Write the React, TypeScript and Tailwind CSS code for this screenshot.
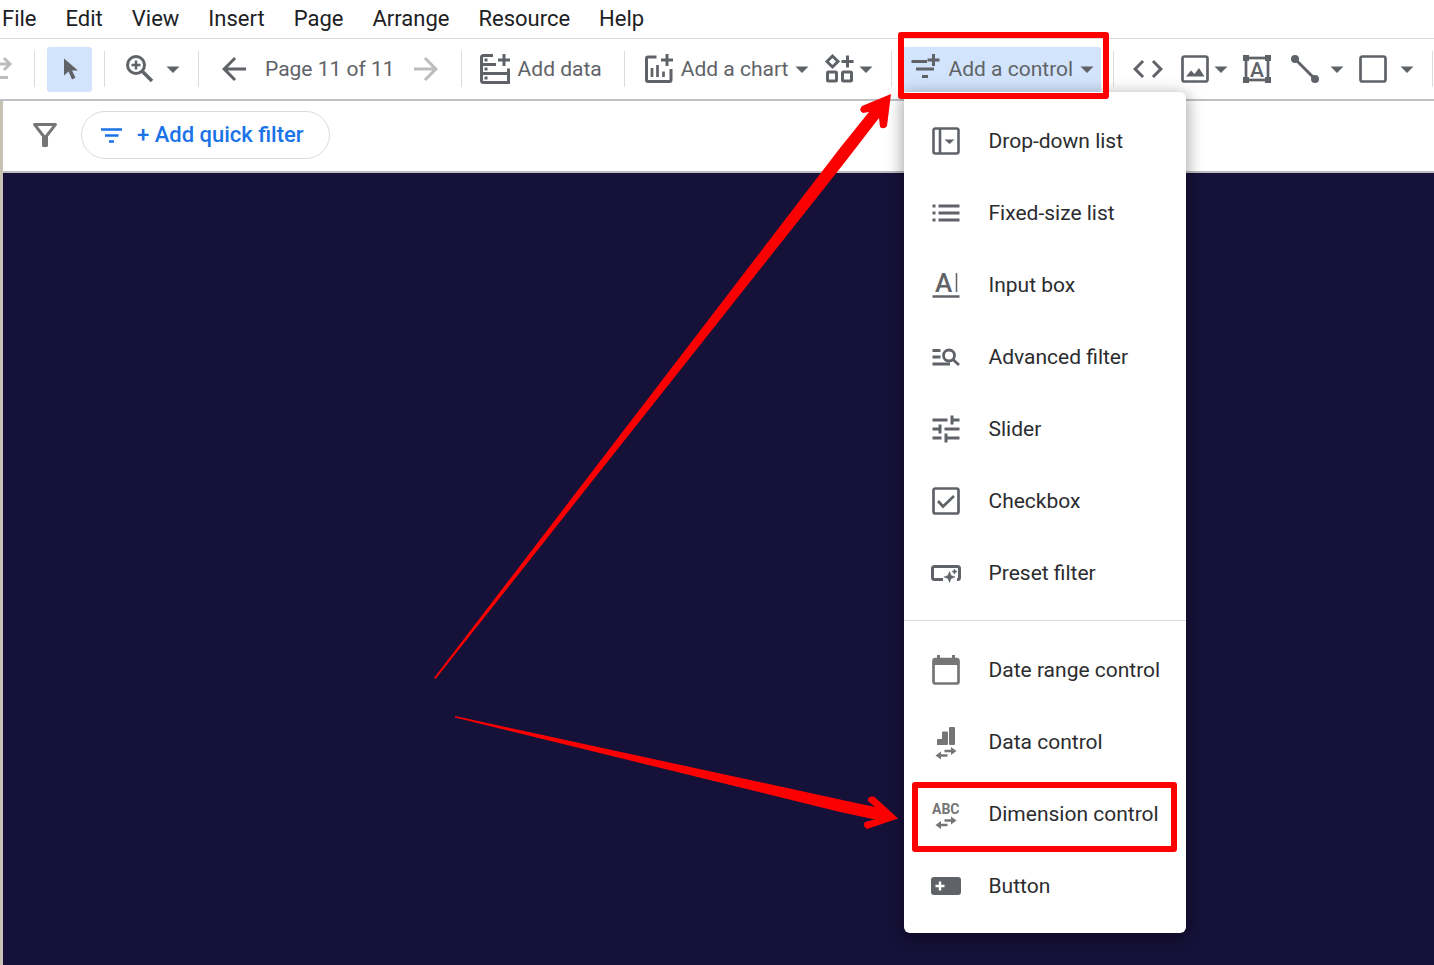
import type { ReactNode } from 'react'
import { MdArrowBack, MdArrowForward, MdTune, MdZoomIn, MdCode, MdOutlineFilterAlt } from 'react-icons/md'

function Caret(): ReactNode {
    return (
        <svg className="w-[14px] h-[7px] shrink-0" viewBox="0 0 14 7" fill="currentColor">
            <path d="M0.5 0.5h13L7 7z" />
        </svg>
    )
}

function Divider(): ReactNode {
    return <div className="w-px h-9 bg-[#dadce0] shrink-0" />
}

function Icon({ children, className = 'w-[30px] h-[30px]', box = '0 0 30 30' }: { children: ReactNode; className?: string; box?: string }): ReactNode {
    return (
        <svg className={`${className} shrink-0 overflow-visible`} viewBox={box} fill="none" stroke="currentColor" strokeWidth="3">
            {children}
        </svg>
    )
}

function SwapArrows({ y }: { y: number }): ReactNode {
    return (
        <g transform={`translate(0 ${y})`}>
            <path d="M13.5 0H21M9 4.500H16.500" strokeWidth="2.600" />
            <path d="M20 -4l5.500 4l-5.500 4zM10 0.500l-5.500 4l5.500 4z" fill="currentColor" stroke="none" />
        </g>
    )
}

const menus = ['File', 'Edit', 'View', 'Insert', 'Page', 'Arrange', 'Resource', 'Help']

const filters = [
    {
        name: 'Drop-down list',
        icon: (
            <Icon>
                <rect x="2.5" y="2.5" width="25" height="25" rx="2" strokeWidth="2.6" />
                <path d="M9 2v26" strokeWidth="2.6" />
                <path d="M13.500 13.500h10l-5 4.500z" fill="currentColor" stroke="none" />
            </Icon>
        ),
    },
    {
        name: 'Fixed-size list',
        icon: (
            <Icon>
                <path d="M7.500 8H28.500M7.500 15H28.500M7.500 22H28.500M1.500 8h3M1.500 15h3M1.500 22h3" strokeWidth="3.200" />
            </Icon>
        ),
    },
    {
        name: 'Input box',
        icon: (
            <Icon>
                <path d="M1.500 26.500h27" strokeWidth="2.500" />
                <text x="4" y="22" fontSize="26" fontWeight="500" fill="currentColor" stroke="none">A</text>
                <path d="M25.500 3v19" strokeWidth="1.500" />
            </Icon>
        ),
    },
    {
        name: 'Advanced filter',
        icon: (
            <Icon>
                <path d="M1.500 8.500h8M1.500 15h8M1.500 22h17.500" strokeWidth="2.800" />
                <circle cx="18" cy="13.5" r="5.5" strokeWidth="2.8" />
                <path d="M22 17.500l6 5.500" strokeWidth="2.800" />
            </Icon>
        ),
    },
    { name: 'Slider', icon: <MdTune className="w-9 h-9" /> },
    {
        name: 'Checkbox',
        icon: (
            <Icon>
                <rect x="2.5" y="2.5" width="25" height="25" rx="2" strokeWidth="2.7" />
                <path d="M7 15l5 5.500L23 10" strokeWidth="2.700" />
            </Icon>
        ),
    },
    {
        name: 'Preset filter',
        icon: (
            <Icon>
                <path d="M12 21.500H3.500q-2 0-2-2V10.500q0-2 2-2h23q2 0 2 2v9q0 2-2 2H26" />
                <path d="M18.500 13.500l1.500 4l4 1.500l-4 1.500l-1.500 4l-1.500-4l-4-1.500l4-1.500zM23.500 11l.8 1.800l1.800.8l-1.800.8l-.8 1.800l-.8-1.800l-1.800-.8l1.800-.8z" fill="currentColor" strokeWidth="0.5" />
            </Icon>
        ),
    },
]

const controls = [
    {
        name: 'Date range control',
        icon: (
            <Icon className="w-[30px] h-[30px] text-[#757575]">
                <rect x="2.5" y="4" width="25" height="24.5" rx="2" strokeWidth="2.7" />
                <path d="M2 4h26v6H2z" fill="currentColor" stroke="none" />
                <path d="M7.500 0v5M22.500 0v5" />
            </Icon>
        ),
    },
    {
        name: 'Data control',
        icon: (
            <Icon className="w-[30px] h-9 text-[#757575]" box="0 0 30 36">
                <path d="M6 21v-5q0-1 1-1h4V8.500q0-1 1-1h4q1 0 1 1V20q0 1-1 1zM18 20V4q0-1 1-1h4q1 0 1 1v16q0 1-1 1h-4q-1 0-1-1z" fill="currentColor" stroke="none" />
                <SwapArrows y={27} />
            </Icon>
        ),
    },
    {
        name: 'Dimension control',
        marked: true,
        icon: (
            <Icon className="w-[30px] h-9 text-[#757575]" box="0 0 30 36">
                <text x="1" y="18" fontSize="14" fontWeight="700" fill="currentColor" stroke="none">ABC</text>
                <SwapArrows y={24.5} />
            </Icon>
        ),
    },
    {
        name: 'Button',
        icon: (
            <Icon>
                <rect x="0" y="6" width="30" height="18" rx="3" fill="currentColor" stroke="none" />
                <path d="M4.500 15h9M9 10.500v9" stroke="white" strokeWidth="2.4" />
            </Icon>
        ),
    },
]

function MenuItem({ name, icon, marked = false }: { name: string; icon: ReactNode; marked?: boolean }): ReactNode {
    return (
        <li className="relative">
            <button className="flex items-center w-full h-18 pl-6 gap-6 text-[#2b2c2f] whitespace-nowrap">
                <span className="w-9 flex justify-center text-[#5f6368]">{icon}</span>
                {name}
            </button>
            {marked && <span className="absolute left-2 right-[9px] top-1 -bottom-[2px] border-6 border-[#ff0000] rounded-[3px] pointer-events-none" />}
        </li>
    )
}

function ControlMenu(): ReactNode {
    return (
        <div className="absolute left-px top-full w-[282px] bg-white rounded-md shadow-[0_4px_16px_2px_rgba(0,0,0,0.35)] z-10">
            <ul className="pt-[13px] pb-[11px] border-b border-[#dadce0]">
                {filters.map((f) => (
                    <MenuItem key={f.name} {...f} />
                ))}
            </ul>
            <ul className="pt-[13px] pb-[11px]">
                {controls.map((c) => (
                    <MenuItem key={c.name} {...c} />
                ))}
            </ul>
        </div>
    )
}

function Arrows(): ReactNode {
    return (
        <svg className="absolute left-0 top-0 w-[1434px] h-[965px] z-20 pointer-events-none" viewBox="0 0 1434 965" fill="#fa0000">
            <path d="M434 678L840 148L869 112L863 113Q858 111 862 106L891 94L887 126Q884 130 880 127L879 118L845 162L435.500 679z" />
            <path d="M455 716L840 799.500L875 807L868 801Q867 796 874 796.500L898 818.500L867 829Q862 826 865 822L875 819.500L840 812L455 717.500z" />
        </svg>
    )
}

export default function App(): ReactNode {
    return (
        <div className="relative min-h-screen flex flex-col bg-white overflow-hidden font-['Roboto',sans-serif] text-[21px] leading-6">
            <nav className="flex items-center h-[39px] pl-[2px] pb-px gap-[29px] border-b border-[#dadce0] text-[22px] text-[#202124]">
                {menus.map((m) => (
                    <button key={m}>{m}</button>
                ))}
            </nav>

            <div className="flex items-center h-[62px] border-b-2 border-[#bdc1c6] text-[#5f6368] whitespace-nowrap">
                <button aria-label="Redo" className="text-[#bdbdbd] mr-[22px]">
                    <Icon className="w-3 h-[30px]" box="0 0 12 30">
                        <path d="M0 10h10M4 4l6 6l-6 6M0 23.500h8" />
                    </Icon>
                </button>
                <Divider />
                <button aria-label="Select" className="w-[45px] h-[45px] mx-3 bg-[#d2e3fc] rounded-[3px] flex items-center justify-center shrink-0">
                    <Icon>
                        <path d="M9 4.500v17l4.500-4l3.500 8l3.500-1.700l-3.500-7.300h6z" fill="currentColor" stroke="none" />
                    </Icon>
                </button>
                <Divider />
                <button aria-label="Zoom" className="flex items-center gap-2 ml-[17px] mr-[18px]">
                    <Icon className="w-9 h-9" box="0 0 36 36">
                        <circle cx="14" cy="14" r="8.5" />
                        <path d="M20 20l10 10" strokeWidth="3.5" />
                        <path d="M14 9.500v9M9.500 14h9" strokeWidth="2.500" />
                    </Icon>
                    <Caret />
                </button>
                <Divider />
                <button aria-label="Previous page" className="ml-[17px]">
                    <MdArrowBack className="w-9 h-9" />
                </button>
                <button className="ml-[13px]">Page 11 of 11</button>
                <button aria-label="Next page" className="ml-[13px] mr-[17px] text-[#bdbdbd]">
                    <MdArrowForward className="w-9 h-9" />
                </button>
                <Divider />
                <button className="flex items-center gap-2 ml-[18px] mr-[22px]">
                    <Icon>
                        <path d="M13 1.500H3.500q-2 0-2 2V26.500q0 2 2 2H28.500V14.500M1.500 10.500H16M1.500 19.500H28.500M24 0v12M18 6h12" />
                        <path d="M4.500 6h3M4.500 15h3M4.500 24h3" />
                    </Icon>
                    Add data
                </button>
                <Divider />
                <button className="flex items-center gap-[7px] ml-[19px] mr-4">
                    <Icon>
                        <path d="M12.500 3H4q-1.500 0-1.500 1.500V26q0 1.500 1.500 1.500h21.500q1.500 0 1.500-1.500V15M23 0v12M17 6h12" />
                        <path d="M8 14v9M13.500 11v12M19.500 17.500v5.500" strokeWidth="2.700" />
                    </Icon>
                    Add a chart
                    <Caret />
                </button>
                <button aria-label="Community visualizations" className="flex items-center gap-1 mr-[18px]">
                    <Icon>
                        <path d="M7.500 2L13 7.500L7.500 13L2 7.500zM22.500 1.500v12M16.500 7.500h12" />
                        <rect x="2.5" y="18" width="9" height="9" rx="1" />
                        <rect x="17.500" y="18" width="9" height="9" rx="1" />
                    </Icon>
                    <Caret />
                </button>
                <Divider />
                <div className="relative ml-[11px] mr-3 shrink-0">
                    <button className="flex items-center h-[45px] pl-2 pr-[7px] gap-[7px] bg-[#d2e3fc] rounded-[3px]">
                        <Icon>
                            <path d="M0.500 7.500H16M22.500 0v12M16.500 6h12M5 15H23M11 22.500h6" />
                        </Icon>
                        Add a control
                        <Caret />
                    </button>
                    <ControlMenu />
                    <span className="absolute -left-[5px] -right-2 -top-[15px] -bottom-[7px] border-6 border-[#ff0000] rounded-[3px] z-20 pointer-events-none" />
                </div>
                <Divider />
                <button aria-label="Embed" className="ml-4 mr-[14px]">
                    <MdCode className="w-9 h-9" />
                </button>
                <button aria-label="Image" className="flex items-center gap-1 mr-[14px]">
                    <Icon>
                        <rect x="2.5" y="2.5" width="25" height="25" rx="2" strokeWidth="2.7" />
                        <path d="M6 22.500l5-6l3.500 3.500l4.500-6l5.500 8.500z" fill="currentColor" stroke="none" />
                    </Icon>
                    <Caret />
                </button>
                <button aria-label="Text" className="mr-[18px]">
                    <Icon>
                        <rect x="4" y="4" width="22" height="22" strokeWidth="2.7" />
                        <path d="M1 1h6v6h-6zM23 1h6v6h-6zM1 23h6v6h-6zM23 23h6v6h-6z" fill="currentColor" stroke="none" />
                        <text x="8" y="22.5" fontSize="21" fontWeight="500" fill="currentColor" stroke="none">A</text>
                    </Icon>
                </button>
                <button aria-label="Line" className="flex items-center gap-[10px] mr-[14px]">
                    <Icon>
                        <path d="M5 5l20 20" />
                        <circle cx="5" cy="5" r="4" fill="currentColor" stroke="none" />
                        <circle cx="25" cy="25" r="4" fill="currentColor" stroke="none" />
                    </Icon>
                    <Caret />
                </button>
                <button aria-label="Shape" className="flex items-center gap-3 mr-[18px]">
                    <Icon>
                        <rect x="2.5" y="2.5" width="25" height="25" rx="2" strokeWidth="2.7" />
                    </Icon>
                    <Caret />
                </button>
                <Divider />
            </div>

            <div className="flex flex-1 flex-col border-l-3 border-[#c8c1b6]">
                <div className="flex items-center h-[72px] pl-6 pb-[2px] border-b-2 border-[#bdbdc1]">
                    <button aria-label="Filters" className="text-[#757575]">
                        <MdOutlineFilterAlt className="w-9 h-9" />
                    </button>
                    <button className="flex items-center h-12 ml-[18px] pl-[19px] pr-[25px] gap-[15px] border border-[#dadce0] rounded-full text-[#1a73e8] text-[22px] font-medium">
                        <Icon className="w-[21px] h-[21px]" box="0 0 21 21">
                            <path d="M0 4.500h21M4 10.500h13.500M8 16.500h5" strokeWidth="2.400" />
                        </Icon>
                        + Add quick filter
                    </button>
                </div>
                <main className="flex-1 bg-[#161139]" />
            </div>

            <Arrows />
        </div>
    )
}
